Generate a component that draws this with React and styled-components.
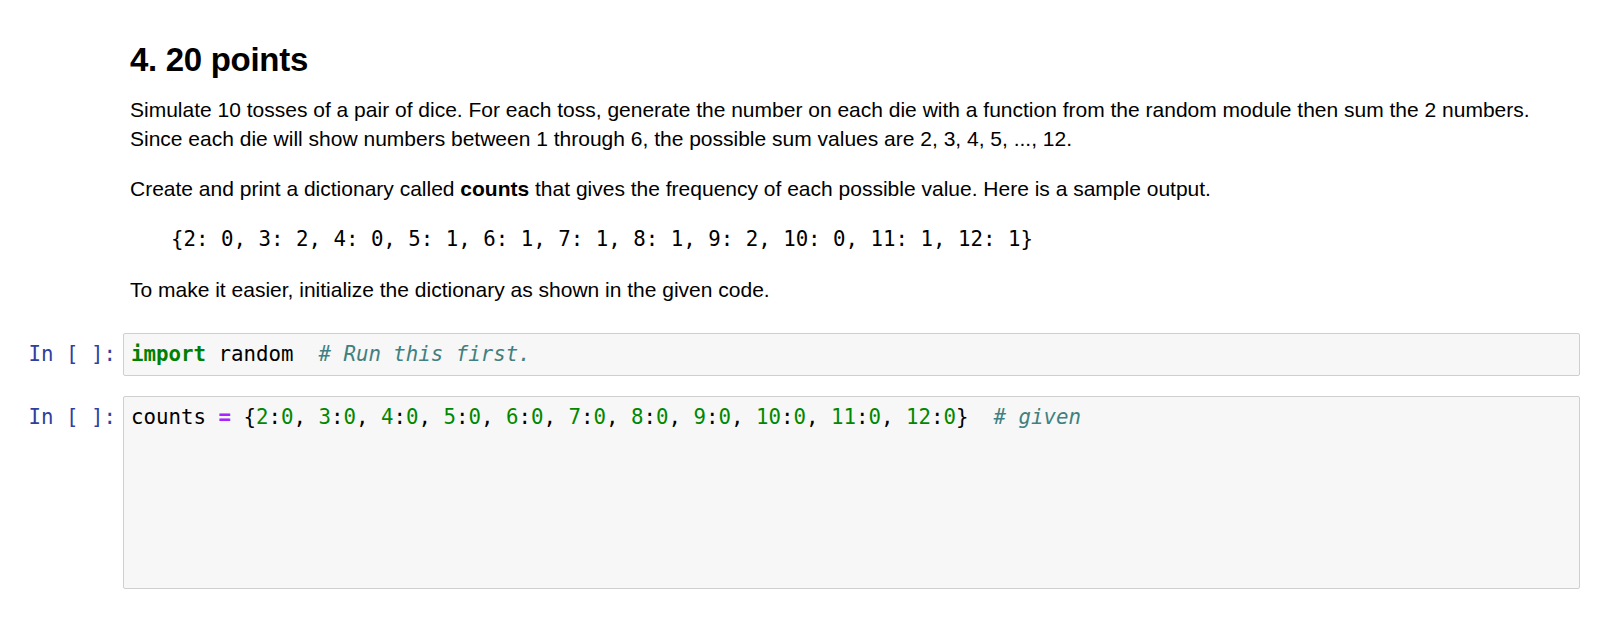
import React from 'react';
import styled, { createGlobalStyle } from 'styled-components';

const GlobalStyle = createGlobalStyle`
  html, body {
    margin: 0;
    padding: 0;
    background: #ffffff;
  }
  body {
    font-family: "Liberation Sans", Arial, Helvetica, sans-serif;
    color: #000000;
  }
`;

const Notebook = styled.div`
  padding: 40px 20px 0 0;
  display: flex;
  flex-direction: column;
`;

const Markdown = styled.div`
  margin-left: 130px;
  font-size: 21px;
  line-height: 29.4px;
`;

const Heading = styled.h2`
  margin: 0 0 15px 0;
  font-size: 33px;
  line-height: 39.6px;
  font-weight: bold;
  letter-spacing: -0.3px;
`;

const Para = styled.p`
  margin: 0 0 21px 0;
`;

const SamplePre = styled.pre`
  margin: 0 0 21px 0;
  padding-left: 41px;
  font-family: "DejaVu Sans Mono", Menlo, monospace;
  font-size: 20.75px;
  line-height: 29.4px;
`;

const Cell = styled.div`
  display: flex;
  align-items: flex-start;
  margin-top: ${p => p.$gap}px;
`;

const Prompt = styled.div`
  width: 116px;
  flex: none;
  text-align: right;
  padding-top: 9px;
  margin-right: 7px;
  font-family: "DejaVu Sans Mono", Menlo, monospace;
  font-size: 20.75px;
  line-height: 25.5px;
  color: #303f9f;
  white-space: pre;
`;

const InputArea = styled.div`
  flex: 1;
  box-sizing: border-box;
  min-height: ${p => p.$minHeight || 0}px;
  background: #f7f7f7;
  border: 1px solid #cfcfcf;
  border-radius: 2px;
  padding: 8px 7px;
  font-family: "DejaVu Sans Mono", Menlo, monospace;
  font-size: 20.75px;
  line-height: 25.5px;
  white-space: pre;
  color: #000000;
`;

const Keyword = styled.span`
  color: #008000;
  font-weight: bold;
`;

const Comment = styled.span`
  color: #408080;
  font-style: italic;
`;

const Num = styled.span`
  color: #008800;
`;

const Op = styled.span`
  color: #aa22ff;
  font-weight: bold;
`;

const keys = [2, 3, 4, 5, 6, 7, 8, 9, 10, 11, 12];

export default function App() {
  return (
    <>
      <GlobalStyle />
      <Notebook>
        <Markdown>
          <Heading>4. 20 points</Heading>
          <Para>
            Simulate 10 tosses of a pair of dice. For each toss, generate the number on each die with a function from the random module then sum the 2 numbers.
            <br />
            Since each die will show numbers between 1 through 6, the possible sum values are 2, 3, 4, 5, ..., 12.
          </Para>
          <Para>
            Create and print a dictionary called <b>counts</b> that gives the frequency of each possible value. Here is a sample output.
          </Para>
          <SamplePre>{'{2: 0, 3: 2, 4: 0, 5: 1, 6: 1, 7: 1, 8: 1, 9: 2, 10: 0, 11: 1, 12: 1}'}</SamplePre>
          <Para>To make it easier, initialize the dictionary as shown in the given code.</Para>
        </Markdown>

        <Cell $gap={7}>
          <Prompt>In [ ]:</Prompt>
          <InputArea>
            <Keyword>import</Keyword> random  <Comment># Run this first.</Comment>
          </InputArea>
        </Cell>

        <Cell $gap={20}>
          <Prompt>In [ ]:</Prompt>
          <InputArea $minHeight={193}>
            counts <Op>=</Op> {'{'}
            {keys.map((k, i) => (
              <React.Fragment key={k}>
                <Num>{k}</Num>:<Num>0</Num>
                {i < keys.length - 1 ? ', ' : ''}
              </React.Fragment>
            ))}
            {'}'}  <Comment># given</Comment>
          </InputArea>
        </Cell>
      </Notebook>
    </>
  );
}
